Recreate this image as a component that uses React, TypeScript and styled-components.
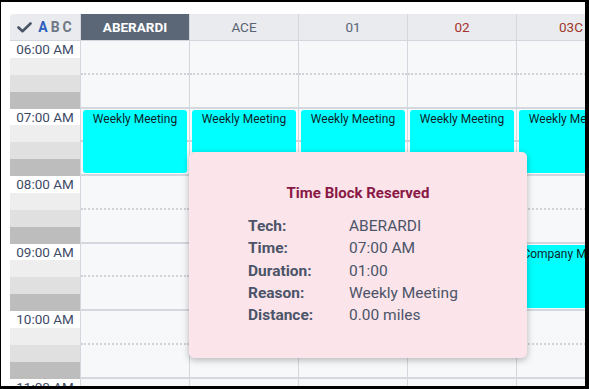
import React from "react";
import styled, { createGlobalStyle } from "styled-components";

const GlobalStyle = createGlobalStyle`
  * { box-sizing: border-box; }
  html, body { margin: 0; padding: 0; background: #ffffff; }
  body { font-family: Roboto, "Liberation Sans", Arial, sans-serif; }
`;

const Frame = styled.div`
  position: relative;
  width: 589px;
  height: 389px;
  overflow: hidden;
  background: #ffffff;
  border-style: solid;
  border-color: #000000;
  border-width: 2px 4px 3px 1px;
  padding: 12px 0 0 9px;
`;

const Board = styled.div`
  display: grid;
  grid-template-columns: 71px repeat(5, 109px);
  grid-auto-rows: 67.5px;
  grid-template-rows: 27px;
  width: max-content;
`;

const HeadCell = styled.div<{ $active?: boolean; $tone?: string }>`
  display: flex;
  align-items: center;
  justify-content: center;
  height: 27px;
  background: ${(p) => (p.$active ? "#5b6777" : "#e9ebef")};
  color: ${(p) => (p.$active ? "#ffffff" : p.$tone || "#5a6373")};
  font-size: 13.5px;
  font-weight: ${(p) => (p.$active ? 700 : 400)};
  border-right: 1px solid #d4d7dd;
  border-bottom: 1px solid #d4d7dd;
`;

const CornerCell = styled(HeadCell)`
  border-top-left-radius: 4px;
  gap: 6px;
  font-size: 14px;
  font-weight: 700;
  padding-left: 2px;
`;

const Letter = styled.span<{ $on?: boolean }>`
  color: ${(p) => (p.$on ? "#2c5fbe" : "#6f7886")};
  margin-right: 3px;
`;

const TimeCell = styled.div`
  display: flex;
  flex-direction: column;
  border-right: 1px solid #d4d7dd;
`;

const Band = styled.div<{ $shade: string }>`
  flex: 1;
  background: ${(p) => p.$shade};
  color: #3d4a66;
  font-size: 13.5px;
  line-height: 16.875px;
  text-align: center;
  white-space: nowrap;
`;

const SlotCell = styled.div`
  position: relative;
  display: flex;
  flex-direction: column;
  background: #f7f8fa;
  border-right: 1px solid #d4d7dd;
  border-bottom: 2px solid #d4d7dd;
`;

const HalfHour = styled.div<{ $first?: boolean }>`
  flex: 1;
  border-bottom: ${(p) => (p.$first ? "2px dotted #cfd2d8" : "none")};
`;

const Block = styled.div`
  position: absolute;
  top: 1px;
  left: 2px;
  right: 2px;
  bottom: 1px;
  background: #00ffff;
  border-radius: 3px;
  padding: 2px 2px 0;
  color: #0d1f2b;
  font-size: 12px;
  line-height: 14px;
  text-align: center;
  white-space: nowrap;
  overflow: hidden;
`;

const Tip = styled.div`
  position: absolute;
  left: 188px;
  top: 150px;
  width: 338px;
  height: 206px;
  background: #fbe4ea;
  border-radius: 5px;
  box-shadow: 0 2px 7px rgba(0, 0, 0, 0.28);
  padding: 31px 0 0 59px;
  color: #4b5468;
`;

const TipTitle = styled.div`
  margin-left: -59px;
  text-align: center;
  font-size: 15px;
  font-weight: 700;
  line-height: 20px;
  color: #8a1846;
  margin-bottom: 12px;
`;

const TipRow = styled.div`
  display: grid;
  grid-template-columns: 101px auto;
  font-size: 15.5px;
  line-height: 22.25px;
`;

const TipLabel = styled.span`
  font-weight: 700;
`;

const Check = () => (
  <svg width="15" height="11" viewBox="0 0 15 11">
    <path d="M1.5 5.5 L5.5 9.2 L13.5 1.5" fill="none" stroke="#4a5565" strokeWidth="2.6" strokeLinecap="round" strokeLinejoin="round" />
  </svg>
);

const techs = [
  { name: "ABERARDI", active: true },
  { name: "ACE" },
  { name: "01" },
  { name: "02", tone: "#a8312c" },
  { name: "03C", tone: "#a23828" },
];

const hours = ["06:00 AM", "07:00 AM", "08:00 AM", "09:00 AM", "10:00 AM", "11:00 AM"];
const shades = ["#ffffff", "#eeeeee", "#e0e0e0", "#bdbdbd"];

const blocks: Record<string, string> = {
  "1-0": "Weekly Meeting",
  "1-1": "Weekly Meeting",
  "1-2": "Weekly Meeting",
  "1-3": "Weekly Meeting",
  "1-4": "Weekly Meeting",
  "3-4": "Company Meeting",
};

const details = [
  ["Tech:", "ABERARDI"],
  ["Time:", "07:00 AM"],
  ["Duration:", "01:00"],
  ["Reason:", "Weekly Meeting"],
  ["Distance:", "0.00 miles"],
];

export default function App() {
  return (
    <>
      <GlobalStyle />
      <Frame>
        <Board>
          <CornerCell>
            <Check />
            <span>
              <Letter $on>A</Letter>
              <Letter>B</Letter>
              <Letter>C</Letter>
            </span>
          </CornerCell>
          {techs.map((t) => (
            <HeadCell key={t.name} $active={t.active} $tone={t.tone}>
              {t.name}
            </HeadCell>
          ))}
          {hours.map((h, r) => (
            <React.Fragment key={h}>
              <TimeCell>
                {shades.map((s, i) => (
                  <Band key={s} $shade={s}>
                    {i === 0 ? h : null}
                  </Band>
                ))}
              </TimeCell>
              {techs.map((t, c) => (
                <SlotCell key={t.name}>
                  <HalfHour $first />
                  <HalfHour />
                  {blocks[`${r}-${c}`] && <Block>{blocks[`${r}-${c}`]}</Block>}
                </SlotCell>
              ))}
            </React.Fragment>
          ))}
        </Board>
        <Tip>
          <TipTitle>Time Block Reserved</TipTitle>
          {details.map(([k, v]) => (
            <TipRow key={k}>
              <TipLabel>{k}</TipLabel>
              <span>{v}</span>
            </TipRow>
          ))}
        </Tip>
      </Frame>
    </>
  );
}
